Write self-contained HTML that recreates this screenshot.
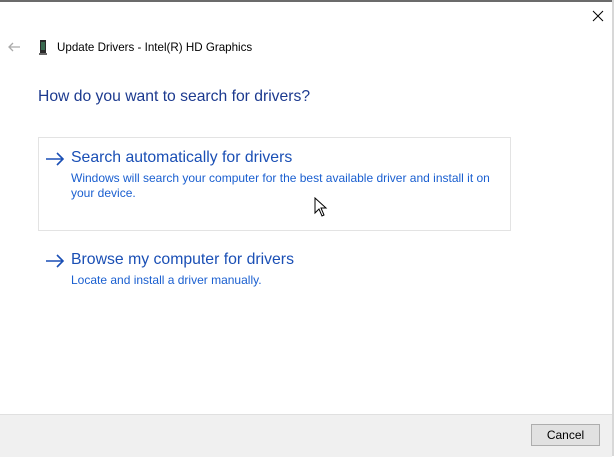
<!DOCTYPE html>
<html><head><meta charset="utf-8"><style>
body{margin:0;width:614px;height:456px;background:#fff;font-family:"Segoe UI","Liberation Sans",sans-serif;position:relative;overflow:hidden}
.top{position:absolute;left:0;top:0;width:614px;height:2px;background:#6b6b6b}
.rb{position:absolute;left:612px;top:0;width:2px;height:456px;background:#d8d8d8}
.t{position:absolute;font-size:11.6px;color:#000;white-space:nowrap}
.h{position:absolute;left:38px;top:88px;font-size:15.7px;color:#1c3a8f;white-space:nowrap}
.card{position:absolute;left:38px;top:137px;width:473px;height:94px;border:1px solid #e3e3e3;box-sizing:border-box}
.lk{position:absolute;left:71px;font-size:15.8px;color:#1a4fb5;white-space:nowrap}
.ds{position:absolute;left:71px;font-size:12px;color:#1a5fd0;line-height:15px;white-space:nowrap}
.ar{position:absolute;left:45px;width:20px;height:14px}
.foot{position:absolute;left:0;top:414px;width:612px;height:42px;background:#f0f0f0;border-top:1px solid #e0e0e0}
.btn{position:absolute;left:531px;top:424px;width:69px;height:22px;box-sizing:border-box;border:1px solid #adadad;background:#e1e1e1;font-size:12px;text-align:center;line-height:20px}
</style></head><body>
<div class="top"></div><div class="rb"></div>
<svg style="position:absolute;left:592px;top:10px" width="12" height="12"><path d="M1 1L11 11M11 1L1 11" stroke="#000" stroke-width="1"/></svg>
<svg style="position:absolute;left:7px;top:41px" width="14" height="12"><path d="M13 6H2M6 2L2 6L6 10" stroke="#aaa" stroke-width="1.3" fill="none"/></svg>
<svg style="position:absolute;left:39px;top:40px" width="8" height="15"><rect x="1" y="0" width="6" height="13" fill="#2a2a2a"/><rect x="2" y="2" width="4" height="8" fill="#3a6a50"/><rect x="0" y="13" width="8" height="2" fill="#666"/></svg>
<div class="t" style="left:57px;top:41px">Update Drivers - Intel(R) HD Graphics</div>
<div class="h">How do you want to search for drivers?</div>
<div class="card"></div>
<svg class="ar" style="top:152px" viewBox="0 0 20 14"><path d="M1 7H18M12 1L18 7L12 13" stroke="#1a4fb5" stroke-width="1.6" fill="none"/></svg>
<div class="lk" style="top:149px">Search automatically for drivers</div>
<div class="ds" style="top:171px">Windows will search your computer for the best available driver and install it on<br>your device.</div>
<svg class="ar" style="top:254px" viewBox="0 0 20 14"><path d="M1 7H18M12 1L18 7L12 13" stroke="#1a4fb5" stroke-width="1.6" fill="none"/></svg>
<div class="lk" style="top:251px">Browse my computer for drivers</div>
<div class="ds" style="top:273px">Locate and install a driver manually.</div>
<svg style="position:absolute;left:314px;top:197px" width="14" height="20"><path d="M1 1V16L5 12L8 19L10 18L7 11H12Z" fill="#fff" stroke="#000" stroke-width="1"/></svg>
<div class="foot"></div>
<div class="btn">Cancel</div>
</body></html>
